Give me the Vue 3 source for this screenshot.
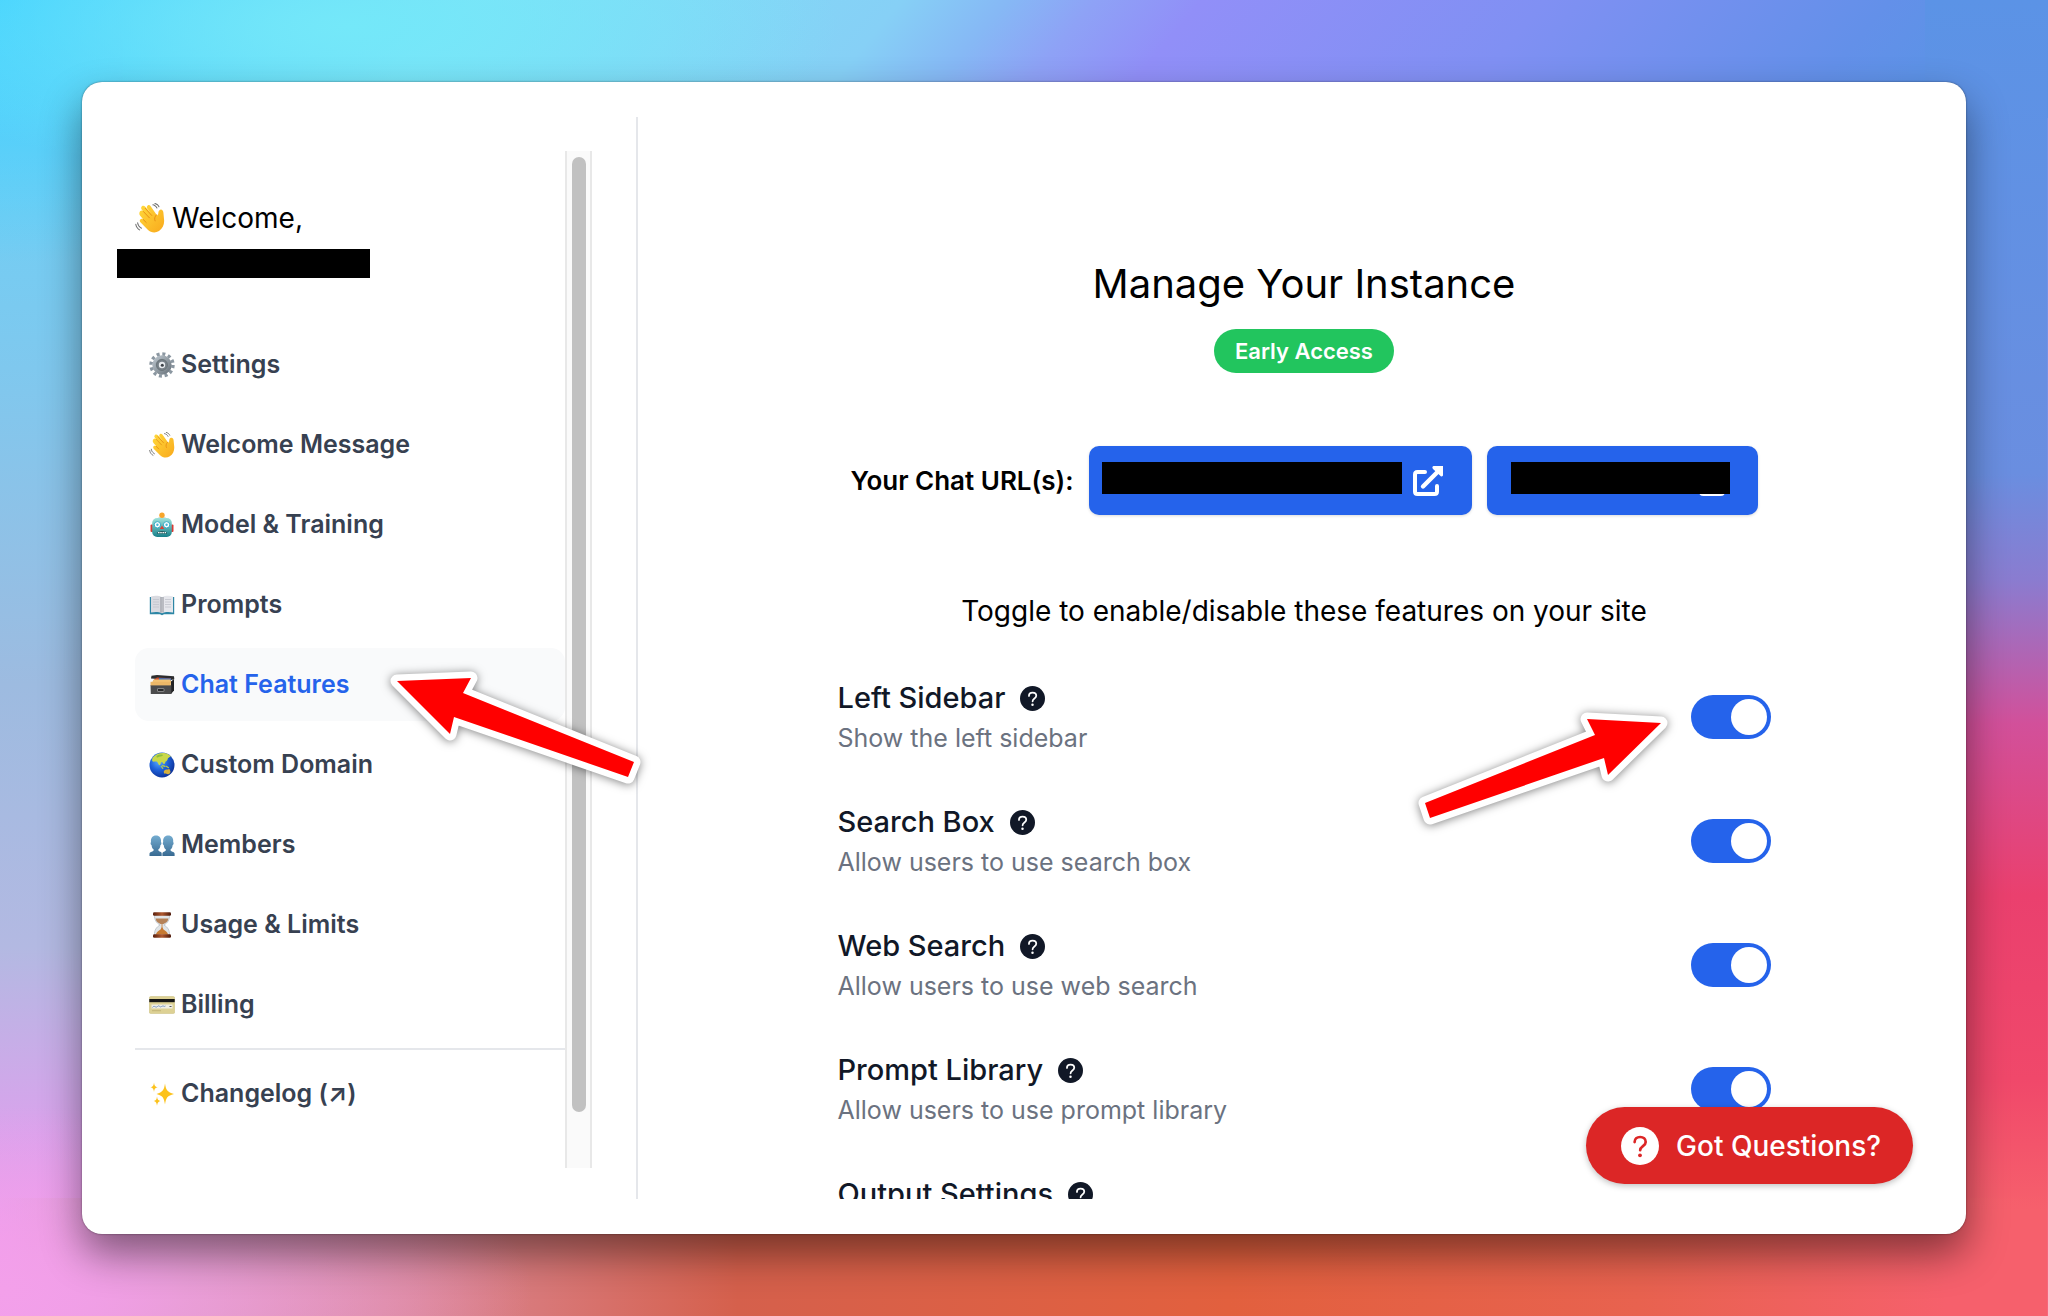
<script setup>
import { ref } from 'vue'

const links = [
  { icon: 'gear', label: 'Settings' },
  { icon: 'wave', label: 'Welcome Message' },
  { icon: 'robot', label: 'Model & Training' },
  { icon: 'book', label: 'Prompts' },
  { icon: 'box', label: 'Chat Features', active: true },
  { icon: 'globe', label: 'Custom Domain' },
  { icon: 'people', label: 'Members' },
  { icon: 'glass', label: 'Usage & Limits' },
  { icon: 'card', label: 'Billing' },
]

const features = ref([
  { id: 'left-sidebar', title: 'Left Sidebar', text: 'Show the left sidebar', on: true },
  { id: 'search-box', title: 'Search Box', text: 'Allow users to use search box', on: true },
  { id: 'web-search', title: 'Web Search', text: 'Allow users to use web search', on: true },
  { id: 'prompt-library', title: 'Prompt Library', text: 'Allow users to use prompt library', on: true },
])
</script>

<template>
  <div class="stage">
    <svg width="0" height="0" class="defs" aria-hidden="true">
      <defs>
        <linearGradient id="gSkin" x1="0" y1="0" x2="1" y2="1">
          <stop offset="0" stop-color="#ffd93b" /><stop offset="1" stop-color="#f9a91c" />
        </linearGradient>
        <linearGradient id="gSteel" x1="0" y1="0" x2="1" y2="1">
          <stop offset="0" stop-color="#b9c3cb" /><stop offset="1" stop-color="#6c767e" />
        </linearGradient>
        <linearGradient id="gTeal" x1="0" y1="0" x2="0" y2="1">
          <stop offset="0" stop-color="#9fe3dc" /><stop offset="1" stop-color="#17808a" />
        </linearGradient>
        <linearGradient id="gPeople" x1="0" y1="0" x2="0" y2="1">
          <stop offset="0" stop-color="#74acd0" /><stop offset="1" stop-color="#386a92" />
        </linearGradient>
        <radialGradient id="gSea" cx=".38" cy=".35" r=".7">
          <stop offset="0" stop-color="#5fb2ff" /><stop offset=".5" stop-color="#1f62da" /><stop offset="1" stop-color="#0b2f96" />
        </radialGradient>
        <linearGradient id="gWood" x1="0" y1="0" x2="1" y2="0">
          <stop offset="0" stop-color="#5a1f0c" /><stop offset=".5" stop-color="#b0592f" /><stop offset="1" stop-color="#4c1808" />
        </linearGradient>
        <symbol id="wave" viewBox="0 0 26 26">
          <path d="M4.4 7.2c.9-1 2.1-.7 2.9.2l3.6 3.8L5.9 5.8c-.9-1-.7-2.2.1-2.9.9-.7 2-.5 2.9.4l4.9 5.6-3.2-4.2c-.7-1-.4-2 .4-2.6.9-.6 1.900-.2 2.600.7l5.100 7.300c.6.800 1.300.500 1.400-.5.100-1.300.200-3.300 1.800-3.800 1.600-.4 2.500.9 2.700 2.500l.6 6.200c.4 4-1.200 7.600-4.400 9.800-3.200 2-7 1.500-9.700-1.100L4.900 16.900c-.9-.9-1-2-.3-2.700.7-.7 1.700-.6 2.600.1L4.500 11.100c-1-1.100-1-2.900-.1-3.900z" fill="url(#gSkin)" />
          <path d="M7.300 7.400l5.200 5.500M9 4.700l5.500 6.100M7.100 14.300l2.600 2.600M18.600 10.200c-1.600 1.700-2 3.600-1.200 5.300" fill="none" stroke="#e58b12" stroke-width=".8" stroke-linecap="round" />
          <path d="M15.500 1.600c1.500.3 2.900 1.400 3.600 2.900M17.300.4c1.700.5 3 1.600 3.600 3.200M2.300 17.200c.3 2 1.500 3.700 3.300 4.600M.7 18.400c.3 2.100 1.500 3.900 3.300 4.900" fill="none" stroke="#6e6e6e" stroke-width=".9" stroke-linecap="round" stroke-dasharray="2 .6" />
        </symbol>
        <symbol id="gear" viewBox="0 0 26 26">
          <circle cx="13" cy="13" r="11" fill="none" stroke="#8b97a1" stroke-width="3.400" stroke-dasharray="3 2.760" />
          <circle cx="13" cy="13" r="8" fill="#8f999f" stroke="url(#gSteel)" stroke-width="3.400" />
          <circle cx="13" cy="13" r="5.500" fill="#788289" stroke="#656e74" stroke-width=".8" />
          <circle cx="13" cy="13" r="3.200" fill="#e8ecef" />
          <circle cx="13.300" cy="13.200" r="1.500" fill="#3a4046" />
        </symbol>
        <symbol id="robot" viewBox="0 0 26 26">
          <rect x="1.500" y="12.500" width="3" height="7.500" rx="1" fill="#d83a34" /><rect x="21.500" y="12.500" width="3" height="7.500" rx="1" fill="#d83a34" />
          <path d="M9.500 5.800h7l1 2.200h-9z" fill="#56706f" /><circle cx="13" cy="3.300" r="2.700" fill="#f7a52b" />
          <rect x="3.200" y="6" width="19.600" height="19" rx="5" fill="url(#gTeal)" />
          <circle cx="8.400" cy="12.800" r="3.200" fill="#fff" stroke="#32a9c3" /><circle cx="17.600" cy="12.800" r="3.200" fill="#fff" stroke="#32a9c3" />
          <circle cx="8.400" cy="12.800" r="1.200" fill="#48b8d8" /><circle cx="17.600" cy="12.800" r="1.200" fill="#48b8d8" />
          <path d="M13 13.500l2.200 3.500h-4.400z" fill="#e03d32" />
          <path d="M8 21.500c0-3 10-3 10 0z" fill="#1d3f44" /><path d="M9 20.600h8" stroke="#eef7f5" stroke-width="1.300" stroke-dasharray="1.600 .6" />
        </symbol>
        <symbol id="book" viewBox="0 0 26 26">
          <path d="M.8 5h24.400v17.300H15l-2 1-2-1H.8z" fill="#2d86a5" />
          <path d="M2 4.400c4-1 8-.9 11 .9v16c-3-1.400-7-1.500-11-.7z" fill="#d9dae0" /><path d="M24 4.400c-4-1-8-.9-11 .9v16c3-1.400 7-1.500 11-.7z" fill="#e6e7ec" />
          <path d="M12 5v15.600M14 5v15.600" stroke="#8d9098" stroke-width="1" />
          <path d="M4 7.500h6M4 10h6M4 12.500h6M4 15h6M16 7.500h6M16 10h6M16 12.500h6M16 15h6" stroke="#c2c4cd" stroke-width=".8" />
        </symbol>
        <symbol id="box" viewBox="0 0 26 26">
          <path d="M2.500 3.800L8 3l17 1.200.3 3L22 8 2 6.500z" fill="#2b2c2e" />
          <path d="M4.500 8L8 5.500l14 .8v4H4.500z" fill="#c84e31" /><path d="M10 6l12 .5v4H10z" fill="#3a73bf" /><path d="M3.500 9.500L5 7.500h16l2 3H3.500z" fill="#f4c373" />
          <path d="M22 9.500L25 7v11.500L22 22z" fill="#232426" />
          <path d="M1.500 13h20.800v9H1.800z" fill="#4b4b4c" /><path d="M1.500 9.800h20.300v3.600H1.500z" fill="#edb868" />
          <rect x="8.500" y="16.500" width="6.500" height="3" rx=".5" fill="#2a2a2b" stroke="#a5a5a5" stroke-width=".7" />
        </symbol>
        <symbol id="globe" viewBox="0 0 26 26">
          <circle cx="13" cy="13" r="12.500" fill="url(#gSea)" />
          <path d="M4.300 5C7 1.800 11.500.2 16.500 1.200c2.700.6 4.500 2 5.400 3.300-1.500.1-1.600 1.200-2.900 1.500-.2 1.600-1.200 3.200-2.600 3.700-.2 1.400-.6 2.300-1.600 2.200-1 0-.9-2-2-1.800-1.300.2-1 2.800-2.200 3.100C9.400 13.500 9.300 10.600 8 9.800 6.600 9 5 10 3.700 9.500 2.600 9 2.900 6.600 4.300 5z" fill="#c9d84a" />
          <path d="M8 3.500c2-1 4.500-1.200 6-.6-.4 1.600-3.800 1.300-5 2.500-1 .8-2.200-.8-1-1.900z" fill="#8bbf3d" />
          <path d="M13.500 13.700l2.500.7M12.300 14.500l1.500 1.900M17.300 14.300l2.200 1.400" stroke="#b9cc45" stroke-width="1.200" stroke-linecap="round" />
          <path d="M15 19c1-1.400 2.500-1.700 3.500-1.500.8.100 1.700-1 2.100 0 .4 1.200 1.300 2 .6 3.200-.8 1.200-2.200 1.900-3.200 1.400-.8-.7-2.300-.1-2.800-.9-.4-.7-.6-1.500-.2-2.200z" fill="#d5b03c" />
        </symbol>
        <symbol id="people" viewBox="0 0 26 26">
          <g fill="url(#gPeople)">
            <path d="M.5 24v-2.200c0-1.200 1-1.700 2.300-2.100 1.500-.5 2-1 1.900-2.200-1.400-1-2-2.600-2.100-4.300C1.300 12.500 1.400 10.800 2 10 1.600 6 3.500 3.500 7 3.500s5.400 2.500 5 6.500c.6.800.7 2.500-.6 3.200-.1 1.700-.7 3.300-2.100 4.300-.1 1.200.4 1.700 1.900 2.200 1.200.4 1.500.9 1.500 2.100V24z" />
            <path d="M13.400 24v-2.200c0-1.200.5-1.700 1.600-2.100 1.500-.5 2-1 1.900-2.200-1.400-1-2-2.600-2.100-4.300-1.300-.7-1.200-2.400-.6-3.200-.4-4 1.500-6.500 5-6.500s5.400 2.500 5 6.500c.6.800.7 2.500-.6 3.200-.1 1.700-.7 3.300-2.100 4.300-.1 1.200.4 1.700 1.900 2.200 1.300.4 2.200.9 2.200 2.100V24z" />
          </g>
        </symbol>
        <symbol id="glass" viewBox="0 0 26 26">
          <path d="M5.500 3h15c.2 5-1.800 7.800-5.600 10 3.800 2.200 5.800 5 5.600 10h-15c-.2-5 1.800-7.800 5.600-10-3.800-2.200-5.800-5-5.600-10z" fill="#e1e5e8" stroke="#b9bfc5" stroke-width=".8" />
          <path d="M6.600 6.500h12.800c-.4 3-2.300 4.300-5 5.500h-2.800c-2.700-1.200-4.600-2.500-5-5.500z" fill="#b58258" />
          <path d="M13 15l1.500 2.500c2 1.200 3.700 2.500 4.700 5H6.800c1-2.500 2.700-3.800 4.700-5z" fill="#c77a32" /><path d="M13 12v5" stroke="#c77a32" stroke-width=".8" />
          <rect x="4" y=".3" width="18" height="3.400" rx="1.300" fill="url(#gWood)" /><rect x="4" y="22.300" width="18" height="3.400" rx="1.300" fill="url(#gWood)" />
        </symbol>
        <symbol id="card" viewBox="0 0 26 26">
          <rect x=".3" y="4.500" width="25.400" height="17" rx="1.500" fill="#ddd194" stroke="#c9bc7b" stroke-width=".5" />
          <path d="M.3 7h25.400v3.200H.3z" fill="#161616" /><rect x="2.500" y="12.500" width="21" height="4" fill="#f0efe6" />
          <path d="M3.500 15.500c2-3 3 1 5-1s2 1.500 4 0 3 .8 4-.5" fill="none" stroke="#5e83b8" stroke-width=".8" /><path d="M20.500 14.500h2" stroke="#555" />
          <path d="M3 18.700h9" stroke="#b7a96a" stroke-width=".7" />
        </symbol>
        <symbol id="spark" viewBox="0 0 26 26">
          <g fill="#fcc21b">
            <path d="M16 2.500c1 6.600 2.300 8.600 9 10.500-6.700 1.700-8 3.800-9 10.500-1-6.700-2.300-8.800-8.500-10.500 6.200-1.900 7.500-3.900 8.500-10.500z" />
            <path d="M5 1.500c.4 3.200 1 4 3.700 4.800C6 7 5.400 8 5 11 4.600 8 4 7 1.500 6.300 4 5.500 4.600 4.700 5 1.500z" /><path d="M8 15.500c.4 3 1.300 4 3.500 4.600-2.200.6-3.100 1.600-3.500 4.700-.4-3.100-1-4.100-3.300-4.700C7 19.500 7.600 18.500 8 15.500z" />
          </g>
        </symbol>
        <symbol id="help" viewBox="0 0 24 24">
          <circle cx="12" cy="12" r="12" fill="currentColor" />
          <path d="M8.600 9.500c0-2 1.500-3.200 3.500-3.200s3.500 1.300 3.500 3.100c0 2.700-3.500 2.600-3.500 5.300" fill="none" stroke="var(--mark)" stroke-width="1.700" stroke-linecap="round" />
          <circle cx="12" cy="17.900" r="1.200" fill="var(--mark)" />
        </symbol>
        <symbol id="external" viewBox="0 0 30 30">
          <path d="M12 6H4.500Q2 6 2 8.500V25.500Q2 28 4.500 28H21.500Q24 28 24 25.500V20" fill="none" stroke="#fff" stroke-width="4" stroke-linecap="round" stroke-linejoin="round" />
          <path d="M10 20.500L24 6.500" stroke="#fff" stroke-width="4.400" stroke-linecap="round" />
          <path d="M20.500 0H30V9.500Q28.500 11.500 27 9.500L20 3Q18.500 1 20.500 0z" fill="#fff" />
        </symbol>
      </defs>
    </svg>

    <div class="window">
      <aside class="sidebar">
        <div class="side-body">
          <p class="hello"><svg class="hand" aria-hidden="true"><use href="#wave" /></svg>Welcome,</p>
          <div class="redacted name"></div>
          <nav class="nav">
            <a v-for="l in links" :key="l.label" href="#" class="nav-link" :class="{ active: l.active }">
              <svg class="emoji" aria-hidden="true"><use :href="'#' + l.icon" /></svg>{{ l.label }}
            </a>
            <hr class="rule" />
            <a href="#" class="nav-link"><svg class="emoji" aria-hidden="true"><use href="#spark" /></svg>Changelog (↗)</a>
          </nav>
        </div>
        <div class="track"><div class="thumb"></div></div>
      </aside>

      <main class="main">
        <h1 class="title">Manage Your Instance</h1>
        <span class="badge">Early Access</span>
        <div class="urls">
          <span class="urls-label">Your Chat URL(s):</span>
          <a href="#" class="url wide" aria-label="Open first chat URL">
            <svg class="ext" aria-hidden="true"><use href="#external" /></svg>
            <span class="redacted cover"></span>
          </a>
          <a href="#" class="url" aria-label="Open second chat URL">
            <svg class="ext" aria-hidden="true"><use href="#external" /></svg>
            <span class="redacted cover"></span>
          </a>
        </div>
        <p class="lead">Toggle to enable/disable these features on your site</p>
        <div class="features">
          <div v-for="f in features" :key="f.id" class="feature">
            <div>
              <label class="f-title" :for="f.id">{{ f.title }}<svg class="help" aria-hidden="true"><use href="#help" /></svg></label>
              <p class="f-text">{{ f.text }}</p>
            </div>
            <input :id="f.id" v-model="f.on" type="checkbox" class="switch" />
          </div>
          <h2 class="f-title">Output Settings<svg class="help" aria-hidden="true"><use href="#help" /></svg></h2>
        </div>
      </main>

      <button type="button" class="questions">
        <svg class="q-icon" aria-hidden="true"><use href="#help" /></svg>Got Questions?
      </button>

      <svg class="arrow arrow-left" viewBox="0 0 270 130" aria-hidden="true">
        <path d="M15 31L89 28L81 43L252 112L246 127L72 67L68 84Z" />
      </svg>
      <svg class="arrow arrow-right" viewBox="0 0 270 130" aria-hidden="true">
        <path d="M251 23L177 19L185 35L15 103L20 118L194 58L198 75Z" />
      </svg>
    </div>
  </div>
</template>

<style>
body {
  margin: 0;
}
</style>

<style scoped>
.stage {
  box-sizing: border-box;
  height: 100vh;
  padding: 82px;
  overflow: hidden;
  font-family: Inter, "Liberation Sans", sans-serif;
  color: #000;
  background:
    radial-gradient(ellipse 24% 12% at 17% 2%, #74e8f9 0%, #74e8f900 100%),
    radial-gradient(ellipse 20% 20% at 0% 0%, #3fd0ff 0%, #3fd0ff00 100%),
    radial-gradient(ellipse 26% 14% at 0% 98%, #f3a0ea 0%, #f3a0ea00 100%),
    linear-gradient(90deg, #e2a0cc00 0%, #d99ab8 9%, #da8896 20%, #d5604c 36%, #e2603e 60%, #e8624f 80%, #f6606c 95%, #f6606c00 100%) bottom / 100% 9% no-repeat,
    linear-gradient(180deg, #5b93e6 0%, #6a8ee0 36%, #8a7cd0 44%, #d2509a 55%, #ea406e 68%, #f0486a 82%, #f6606c 92%) right / 6% 100% no-repeat,
    linear-gradient(180deg, #62d4fa 0%, #7fc8ee 28%, #9dbbe0 52%, #b3b9e2 72%, #d9a3ec 86%, #ee9ced 94%) left / 6% 100% no-repeat,
    linear-gradient(130deg, #62d4fa 6%, #7fe0f7 22%, #86d0f6 42%, #86b8f5 47%, #8ea2f6 51%, #918ff8 56%, #8090f3 72%, #6390e9 88%, #5b93e6 94%) top / 100% 9% no-repeat,
    #ee9ced;
}
.defs {
  position: absolute;
}
p, h1, h2 {
  margin: 0;
  font-weight: 400;
}
.window {
  position: relative;
  box-sizing: border-box;
  display: flex;
  height: 100%;
  padding: 35px 0;
  background: #fff;
  border-radius: 20px;
  box-shadow: 0 0 2px rgba(0, 0, 0, .5), 0 20px 40px rgba(0, 0, 0, .45);
}
.sidebar {
  box-sizing: border-box;
  flex: 0 0 554px;
  display: flex;
  padding: 34px 44px 31px 35px;
}
.side-body {
  flex: 1;
  padding-top: 47px;
}
.hello {
  display: flex;
  align-items: center;
  gap: 7px;
  padding-left: 18px;
  font-size: 28px;
  line-height: 40px;
}
.hand {
  width: 30px;
  height: 30px;
}
.redacted {
  background: #000;
}
.name {
  width: 253px;
  height: 29px;
  margin-top: 11px;
}
.nav {
  display: flex;
  flex-direction: column;
  gap: 7px;
  margin: 50px 0 0 18px;
}
.nav-link {
  display: flex;
  align-items: center;
  gap: 6px;
  padding: 0 14px;
  border-radius: 14px;
  font-size: 25px;
  font-weight: 600;
  line-height: 73px;
  color: #374151;
  text-decoration: none;
}
.nav-link.active {
  background: #f9fafb;
  color: #2563eb;
}
.emoji {
  width: 26px;
  height: 26px;
}
.rule {
  width: 100%;
  height: 2px;
  margin: 0;
  border: 0;
  background: #e5e7eb;
}
.track {
  box-sizing: border-box;
  flex: 0 0 27px;
  padding: 6px 4px 6px 5px;
  border: solid #e8e8e8;
  border-width: 0 2px;
  background: #fafafa;
}
.thumb {
  height: 95%;
  border-radius: 8px;
  background: #c1c1c1;
}
.main {
  flex: 1;
  display: flex;
  flex-direction: column;
  align-items: center;
  padding: 141px 0 0 4px;
  overflow: hidden;
  border-left: 2px solid #e5e7eb;
}
.title {
  font-size: 40px;
  line-height: 52px;
}
.badge {
  margin-top: 19px;
  padding: 0 21px;
  border-radius: 22px;
  background: #22c55e;
  color: #fff;
  font-size: 22px;
  font-weight: 600;
  line-height: 44px;
}
.urls {
  display: flex;
  align-items: center;
  gap: 15px;
  margin-top: 73px;
}
.urls-label {
  font-size: 26px;
  font-weight: 600;
}
.url {
  position: relative;
  box-sizing: border-box;
  display: flex;
  justify-content: flex-end;
  align-items: center;
  width: 271px;
  height: 69px;
  padding-right: 29px;
  border-radius: 10px;
  background: #2563eb;
  box-shadow: 0 1px 3px rgba(0, 0, 0, .15);
}
.wide {
  width: 383px;
}
.ext {
  width: 30px;
  height: 30px;
}
.cover {
  position: absolute;
  inset: 16px 28px 21px 24px;
}
.wide .cover {
  inset: 16px 70px 21px 13px;
}
.lead {
  margin-top: 76px;
  font-size: 28px;
  line-height: 40px;
}
.features {
  display: flex;
  flex-direction: column;
  gap: 44px;
  width: 933px;
  margin-top: 46px;
}
.feature {
  display: flex;
  justify-content: space-between;
  align-items: center;
}
.f-title {
  display: flex;
  align-items: center;
  gap: 15px;
  font-size: 29px;
  font-weight: 500;
  line-height: 42px;
  color: #111827;
}
.help {
  --mark: #fff;
  width: 25px;
  height: 25px;
}
.f-text {
  font-size: 25px;
  line-height: 38px;
  color: #6b7280;
}
.switch {
  appearance: none;
  display: flex;
  width: 80px;
  height: 44px;
  margin: 0;
  padding: 4px;
  box-sizing: border-box;
  border-radius: 22px;
  background: #d1d5db;
}
.switch::before {
  content: "";
  width: 36px;
  height: 36px;
  border-radius: 50%;
  background: #fff;
}
.switch:checked {
  justify-content: flex-end;
  background: #2563eb;
}
.questions {
  position: absolute;
  right: 53px;
  bottom: 50px;
  display: flex;
  align-items: center;
  gap: 17px;
  height: 77px;
  padding: 0 32px 0 35px;
  border: 0;
  border-radius: 39px;
  background: #dc2626;
  box-shadow: 0 2px 6px rgba(0, 0, 0, .25);
  color: #fff;
  font-family: inherit;
  font-size: 28px;
  font-weight: 500;
}
.q-icon {
  --mark: #dc2626;
  width: 38px;
  height: 38px;
}
.arrow {
  position: absolute;
  width: 270px;
  height: 130px;
  overflow: visible;
  fill: #f00;
  stroke: #fff;
  stroke-width: 13px;
  stroke-linejoin: round;
  paint-order: stroke;
  filter: drop-shadow(0 1px 5px rgba(0, 0, 0, .5));
  pointer-events: none;
}
.arrow-left {
  left: 300px;
  top: 568px;
}
.arrow-right {
  right: 286px;
  top: 618px;
}
</style>
